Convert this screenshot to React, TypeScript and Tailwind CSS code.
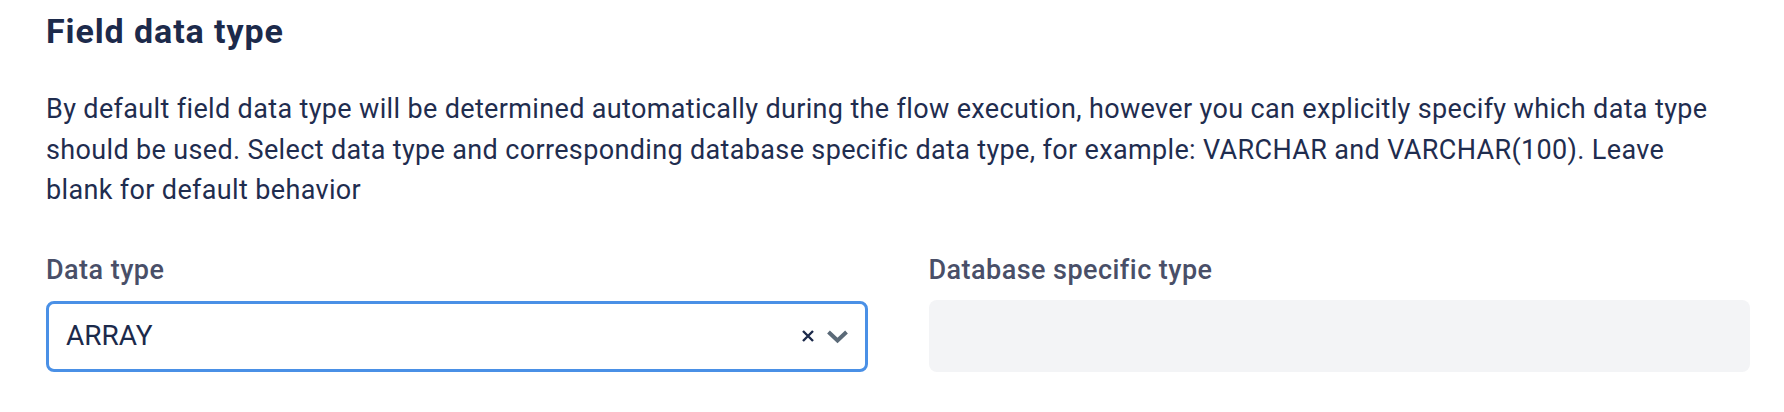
import React from "react";

export default function App() {
  return (
    <div className="w-[1784px] h-[412px] bg-white pl-[46px] pr-[34px] pt-[11px]" style={{ fontFamily: "Roboto, 'Noto Sans', sans-serif" }}>
      <h2 className="text-[34px] leading-[40px] font-bold tracking-[0.9px] text-[#1c2a4b]">Field data type</h2>
      <p className="mt-[38px] max-w-[1690px] text-[27px] leading-[40.5px] tracking-[0.35px] text-[#1f2d4f]">
        By default field data type will be determined automatically during the flow execution, however you can explicitly specify which data type should be used. Select data type and corresponding database specific data type, for example: VARCHAR and VARCHAR(100). Leave blank for default behavior
      </p>
      <div className="mt-[43px] grid grid-cols-2 gap-x-[61px]">
        <div className="flex flex-col">
          <label className="text-[27px] leading-[32px] font-medium tracking-[0.45px] text-[#494f68]">Data type</label>
          <div className="mt-[15px] h-[71px] rounded-[8px] border-[3px] border-[#4a90e6] bg-white flex items-center pl-[17px] pr-[16px]">
            <span className="flex-1 text-[28px] text-[#1c2a4b]">ARRAY</span>
            <svg width="14" height="14" viewBox="0 0 14 14" className="mr-[11px]">
              <path d="M2 2 L12 12 M12 2 L2 12" stroke="#1c2a4b" strokeWidth="2.4" strokeLinecap="butt" />
            </svg>
            <svg width="23" height="15" viewBox="0 0 23 15">
              <path d="M2.5 3 L11.5 11.5 L20.5 3" stroke="#5b6a78" strokeWidth="4" fill="none" strokeLinejoin="miter" />
            </svg>
          </div>
        </div>
        <div className="flex flex-col">
          <label className="text-[27px] leading-[32px] font-medium tracking-[0.45px] text-[#494f68]">Database specific type</label>
          <div className="mt-[14px] h-[72px] rounded-[8px] bg-[#f3f4f6]" />
        </div>
      </div>
    </div>
  );
}
